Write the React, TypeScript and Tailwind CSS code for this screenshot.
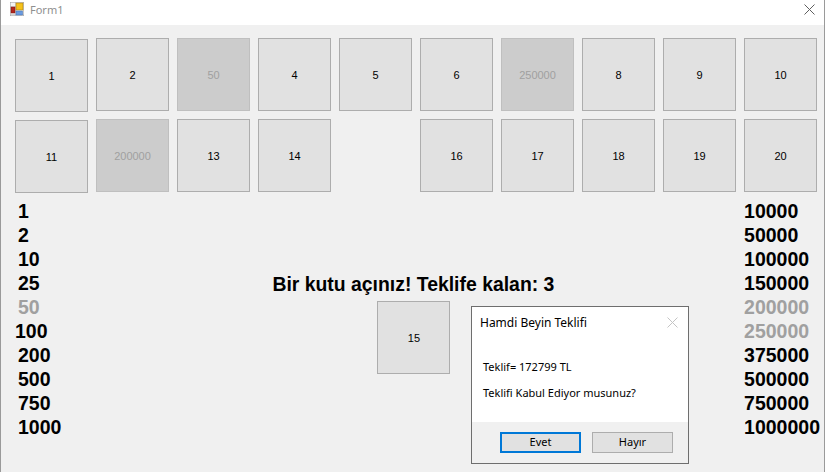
const ROW_ONE = ["1", "2", "50", "4", "5", "6", "250000", "8", "9", "10"];
const ROW_TWO = ["11", "200000", "13", "14", "", "16", "17", "18", "19", "20"];
const OPENED = ["50", "250000", "200000"];
const LEFT_PRIZES = ["1", "2", "10", "25", "50", "100", "200", "500", "750", "1000"];
const RIGHT_PRIZES = ["10000", "50000", "100000", "150000", "200000", "250000", "375000", "500000", "750000", "1000000"];
const GONE = ["50", "200000", "250000"];

function Box({ label, nudge }: { label: string; nudge?: boolean }) {
  // kutu 15 ortada duruyor, burada sadece boş yer
  if (!label) return <div className="h-[73px] w-[73px] shrink-0" />;
  const opened = OPENED.includes(label);
  return (
    <div
      className={[
        "flex h-[73px] w-[73px] shrink-0 items-center justify-center border pt-px text-[11px]",
        nudge ? "mt-px" : "",
        opened ? "border-[#bfbfbf] bg-[#cccccc] text-[#a0a0a0]" : "border-[#adadad] bg-[#e1e1e1] text-black",
      ].join(" ")}
    >
      {label}
    </div>
  );
}

function PrizeList({ items }: { items: string[] }) {
  return (
    <div className="flex flex-col">
      {items.map((p) => (
        <div
          key={p}
          className={[
            "h-6 text-[19.5px] font-bold leading-6",
            p === "100" ? "-ml-[3px]" : "",
            GONE.includes(p) ? "text-[#a0a0a0]" : "text-black",
          ].join(" ")}
        >
          {p}
        </div>
      ))}
    </div>
  );
}

function FormIcon() {
  return (
    <svg width="14" height="14" viewBox="0 0 14 14" className="shrink-0">
      <rect x="0.25" y="0.25" width="13.5" height="13.5" fill="#f4f4f4" stroke="#9a9a9a" strokeWidth="0.5" />
      <path d="M0 4.5H6M5.5 0V14M0 12.5H14" stroke="#b4b4b4" strokeWidth="0.5" />
      <rect x="6" y="1" width="7" height="7" fill="#f6c21a" stroke="#a87c10" strokeWidth="0.6" />
      <rect x="1" y="5" width="4" height="6" fill="#b3261e" stroke="#7a1510" strokeWidth="0.5" />
      <rect x="6" y="9" width="6.5" height="4" fill="#6a9be0" stroke="#3f6bb0" strokeWidth="0.5" />
    </svg>
  );
}

function CloseGlyph({ className }: { className: string }) {
  return (
    <svg width="11" height="11" viewBox="0 0 11 11" className={className}>
      <path d="M0.5 0.5L10.5 10.5M10.5 0.5L0.5 10.5" stroke="currentColor" strokeWidth="1" fill="none" />
    </svg>
  );
}

export default function App() {
  return (
    <div className="relative flex h-[472px] w-[825px] flex-col overflow-hidden border-x border-x-[#9a9a9a] bg-[#f0f0f0] font-['Liberation_Sans',sans-serif]">
      {/* Başlık çubuğu */}
      <div className="flex h-[25px] shrink-0 items-center justify-between bg-white pl-[9px] pr-[9px]">
        <div className="-mt-[7px] flex items-center gap-[6px]">
          <FormIcon />
          <span className="mt-[2px] font-['Noto_Sans',sans-serif] text-[11px] text-[#8f8f8f]">Form1</span>
        </div>
        <CloseGlyph className="-mt-[6px] text-[#5f5f5f]" />
      </div>

      <div className="flex flex-col gap-2 pl-[14px] pt-[13px]">
        <div className="flex h-[73px] items-start gap-2">
          {ROW_ONE.map((b, i) => <Box key={b} label={b} nudge={i === 0} />)}
        </div>
        <div className="flex h-[73px] items-start gap-2">
          {ROW_TWO.map((b, i) => <Box key={b || "bos"} label={b} nudge={i === 0} />)}
        </div>
      </div>

      <div className="mt-[7px] flex justify-between pl-[17px] pr-[4px]">
        <PrizeList items={LEFT_PRIZES} />
        <div className="flex flex-1 flex-col pl-[211px] pt-[73px]">
          <div className="h-6 text-[19.4px] font-bold leading-6 text-black">Bir kutu açınız! Teklife kalan: 3</div>
          <div className="ml-[105px] mt-[5px]">
            <Box label="15" />
          </div>
        </div>
        <PrizeList items={RIGHT_PRIZES} />
      </div>

      {/* Hamdi Bey teklif penceresi */}
      <div className="absolute left-[470px] top-[306px] flex h-[158px] w-[218px] flex-col border border-[#6e6e6e] bg-white font-['Noto_Sans',sans-serif] text-black">
        <div className="flex h-[30px] items-center justify-between pl-2 pr-[10px] pt-[1px] text-xs">
          <span>Hamdi Beyin Teklifi</span>
          <CloseGlyph className="text-[#c4c4c4]" />
        </div>
        <div className="flex flex-1 flex-col gap-[13px] pl-[11px] pt-[23px] text-[11px] leading-[13px]">
          <div>Teklif= 172799 TL</div>
          <div>Teklifi Kabul Ediyor musunuz?</div>
        </div>
        <div className="flex h-[41px] items-start gap-[11px] bg-[#f0f0f0] pl-[28px] pt-[10px] text-[11px]">
          <div className="flex h-[21px] w-[81px] items-center justify-center border-2 border-[#0078d7] bg-[#e1e1e1]">Evet</div>
          <div className="flex h-[21px] w-[81px] items-center justify-center border border-[#adadad] bg-[#e1e1e1]">Hayır</div>
        </div>
      </div>
    </div>
  );
}
